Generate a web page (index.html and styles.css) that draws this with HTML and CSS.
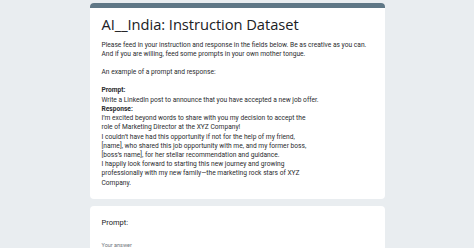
FILE: index.html
```html
<!DOCTYPE html>
<html>
<head>
<meta charset="utf-8">
<link rel="stylesheet" href="styles.css">
</head>
<body>
<div class="page">
  <div class="card header">
    <div class="bar"></div>
    <div class="content">
      <h1 class="title">AI__India: Instruction Dataset</h1>
      <div class="desc">
        <p>Please feed in your instruction and response in the fields below. Be as creative as you can.<br>And if you are willing, feed some prompts in your own mother tongue.</p>
        <p>An example of a prompt and response:</p>
        <p><b>Prompt:</b><br>Write a LinkedIn post to announce that you have accepted a new job offer.<br><b>Response:</b><br>I’m excited beyond words to share with you my decision to accept the<br>role of Marketing Director at the XYZ Company!<br>I couldn’t have had this opportunity if not for the help of my friend,<br>[name], who shared this job opportunity with me, and my former boss,<br>[boss’s name], for her stellar recommendation and guidance.<br>I happily look forward to starting this new journey and growing<br>professionally with my new family—the marketing rock stars of XYZ<br>Company.</p>
      </div>
    </div>
  </div>
  <div class="card question">
    <div class="qtitle">Prompt:</div>
    <div class="answer">Your answer</div>
  </div>
</div>
</body>
</html>
```
FILE: styles.css
```css
html, body {
  margin: 0;
  padding: 0;
  background: #e9edf0;
}
body {
  font-family: Roboto, "Liberation Sans", sans-serif;
  color: #202124;
  height: 248px;
  overflow: hidden;
}
.page {
  width: 295px;
  margin: 0 auto;
  padding-top: 3px;
  display: flex;
  flex-direction: column;
  gap: 7.5px;
}
.card {
  background: #fff;
  border-radius: 4px;
  overflow: hidden;
}
.bar {
  height: 4.5px;
  background: #5f7786;
}
.content {
  padding: 6px 12px 11px 12px;
}
.title {
  margin: 0;
  font-family: "Open Sans", Roboto, sans-serif;
  font-weight: 400;
  font-size: 14.7px;
  line-height: 20px;
  color: #202124;
  letter-spacing: -0.05px;
}
.desc {
  margin-top: 7px;
  font-size: 6.65px;
  line-height: 9.2px;
  color: #2a2b2e;
}
.desc p {
  margin: 0 0 9.2px 0;
}
.desc p:last-child {
  margin-bottom: 0;
}
.desc b {
  font-weight: 700;
}
.question {
  padding: 11px 12px 20px 12px;
}
.qtitle {
  font-size: 7.5px;
  line-height: 11px;
  color: #202124;
}
.answer {
  margin-top: 14px;
  font-size: 5.5px;
  color: #70757a;
}
```
